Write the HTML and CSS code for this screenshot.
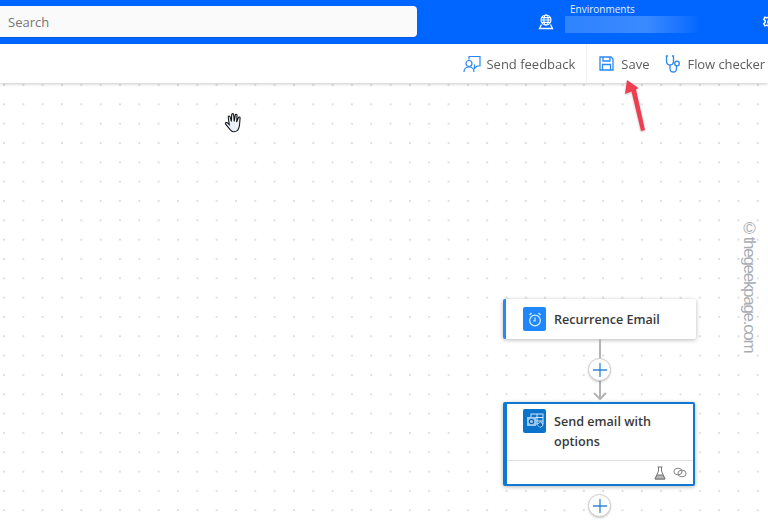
FILE: index.html
```html
<!DOCTYPE html>
<html lang="en">
<head>
<meta charset="utf-8">
<title>Flow editor</title>
<link rel="stylesheet" href="styles.css">
</head>
<body>
<div class="app">
  <header class="topbar">
    <div class="search"><span class="search-text">Search</span></div>
    <svg class="env-icon" viewBox="0 0 16 16" fill="none" stroke="#fff" stroke-width="1.1">
      <circle cx="8" cy="6" r="5"/><ellipse cx="8" cy="6" rx="2.2" ry="5"/><path d="M3 6h10M3.8 3.6h8.4M3.8 8.4h8.4"/><path d="M3.5 10.5 1.5 14.5h13l-2-4" stroke-width="1.3"/>
    </svg>
    <div class="env">
      <span class="env-label">Environments</span>
      <span class="env-name"></span>
    </div>
    <svg class="gear" viewBox="0 0 16 16" fill="none" stroke="#fff" stroke-width="1.4">
      <circle cx="8" cy="8" r="2.2"/><path d="M6.8 1h2.4l.4 2 1.6.9 1.9-.7 1.2 2.1-1.5 1.3v1.8l1.5 1.3-1.2 2.1-1.9-.7-1.6.9-.4 2H6.8l-.4-2-1.6-.9-1.9.7-1.2-2.1 1.500-1.300V6.600L1.700 5.300l1.200-2.100 1.900.7 1.600-.9z"/>
    </svg>
  </header>
  <nav class="toolbar">
    <div class="tool tool-feedback">
      <svg class="tool-icon" width="18" height="18" viewBox="0 0 18 18" fill="none" stroke="#2b88f0" stroke-width="1.2">
        <path d="M6 4.500V1.500h11v9.500h-3l-2.500 2.500V9.500"/><circle cx="6" cy="8.500" r="3"/><path d="M1 17c0-3 2-5 5-5s5 2 5 5"/>
      </svg>
      <span>Send feedback</span>
    </div>
    <div class="tool tool-save">
      <svg class="tool-icon" width="15" height="15" viewBox="0 0 15 15" fill="none" stroke="#2b88f0" stroke-width="1.300">
        <path d="M1 1h11l2 2v11H1z"/><path d="M4 1v4h7V1M3.500 14V8.500h8V14"/>
      </svg>
      <span>Save</span>
    </div>
    <div class="tool tool-checker">
      <svg class="tool-icon" width="17" height="18" viewBox="0 0 17 18" fill="none" stroke="#2b88f0" stroke-width="1.300">
        <path d="M3 1H1.500v5c0 2.500 1.700 4 3.500 4s3.500-1.500 3.500-4V1H7"/><path d="M5 10v3.500c0 2 1.500 3.500 3.500 3.500s3-1.500 3-3.500V11"/><circle cx="12" cy="8.500" r="2.300"/>
      </svg>
      <span class="checker-label">Flow checker</span>
    </div>
  </nav>
  <main class="canvas">
    <svg class="hand" width="20" height="21" viewBox="0 0 19 20">
      <path d="M6 17 1.500 11.500c-.8-1 .5-2 1.500-1.300L5 12 4 5c-.2-1.300 1.500-1.500 1.800-.3L7 9 7.300 2.500c.1-1.300 1.800-1.300 1.900 0L9.700 9l1-6c.2-1.200 1.800-1 1.700.2L12 9.500l1.700-4.200c.5-1.100 2-.5 1.600.6L14.800 12c-.3 3-.8 4-1.800 5.500 0 0-2 1.500-4 1.300-1.500-.1-3-1.800-3-1.800z" fill="#e9f1fb" stroke="#111" stroke-width="1"/>
    </svg>

    <svg class="red-arrow" width="30" height="56" viewBox="0 0 30 56">
      <path d="M4 2 2 16l6.500-2.500L18 53l4-1-9-40.500 2.500-1.500z" fill="#ee3f50"/>
    </svg>

    <div class="watermark">©thegeekpage.com</div>

    <div class="node node-recurrence">
      <span class="node-icon node-icon-clock">
        <svg width="14" height="15" viewBox="0 0 14 15" fill="none" stroke="#d9ecff" stroke-width="1.200">
          <circle cx="7" cy="8.500" r="5.300"/><path d="M7 5.500v3.500H5M1.500 3 3.500 1M12.500 3l-2-2"/>
        </svg>
      </span>
      <span class="node-title node-title-single">Recurrence Email</span>
    </div>

    <svg class="connector" width="24" height="62" viewBox="0 0 24 62" fill="none" stroke="#b4b4b4" stroke-width="2">
      <path d="M12 0v60M6 54l6 6 6-6"/>
    </svg>
    <div class="add add-middle"><svg width="14" height="14" viewBox="0 0 14 14" stroke="#2b88d8" stroke-width="1.300"><path d="M7 0v14M0 7h14"/></svg></div>

    <div class="node node-email">
      <div class="node-body">
        <span class="node-icon node-icon-mail">
          <svg width="18" height="16" viewBox="0 0 18 16" fill="none">
            <rect x="5" y="1" width="12" height="10" fill="none" stroke="#cfe4f7" stroke-width="1"/>
            <path d="M5 4.500h12M5 8h12M11 1v10" stroke="#cfe4f7" stroke-width="1"/>
            <rect x="1" y="4" width="9" height="9" fill="#9cc9ef"/>
            <circle cx="5.500" cy="8.500" r="2.200" fill="none" stroke="#0a63b3" stroke-width="1.200"/>
            <path d="M11 11.500l4-3 2 4-3 2z" fill="#0a63b3" stroke="#cfe4f7" stroke-width=".8"/>
          </svg>
        </span>
        <span class="node-title node-title-wrap">Send email with options</span>
      </div>
      <div class="node-foot">
        <svg width="12" height="14" viewBox="0 0 12 14" fill="none" stroke="#777" stroke-width="1">
          <path d="M3.500 1h5M4.500 1v4L1 13h10L7.500 5V1"/><path d="M3 9h6l2 4H1z" fill="#b5b5b5"/>
        </svg>
        <svg width="14" height="11" viewBox="0 0 14 11" fill="none" stroke="#888" stroke-width="1.100">
          <ellipse cx="5" cy="4.500" rx="4" ry="3.200"/><ellipse cx="9" cy="6.500" rx="4" ry="3.200"/>
        </svg>
      </div>
    </div>

    <div class="add add-bottom"><svg width="14" height="14" viewBox="0 0 14 14" stroke="#2b88d8" stroke-width="1.300"><path d="M7 0v14M0 7h14"/></svg></div>
  </main>
</div>
</body>
</html>
```
FILE: styles.css
```css
* { box-sizing: border-box; }
html, body { margin: 0; height: 100%; overflow: hidden; background: #fff; }
body { font-family: "Open Sans", "Noto Sans", sans-serif; }
.app { width: 768px; height: 521px; display: flex; flex-direction: column; overflow: hidden; filter: blur(.3px); }

.topbar { flex: 0 0 44px; background: #0066ff; display: flex; align-items: flex-start; position: relative; overflow: hidden; }
.search { flex: none; width: 429px; height: 31px; margin: 6px 0 0 -12px; padding: 0 0 0 20px; background: #fafafa; border-radius: 4px; display: flex; align-items: center; box-shadow: 0 1px 1px rgba(0,0,0,.15); }
.search-text { font-size: 13px; color: #767676; }
.env-icon { width: 16px; height: 16px; margin: 14px 0 0 121px; flex: none; }
.env { margin: 0 0 0 11px; width: 136px; flex: none; display: flex; flex-direction: column; }
.env-label { font-size: 10px; line-height: 13px; margin: 3px 0 0 5px; color: #e6f0ff; }
.env-name { height: 17px; width: 136px; background: linear-gradient(90deg, #2f83ff 0%, #3a8aff 60%, #1a74ff 85%, #0066ff 100%); }
.gear { width: 16px; height: 16px; margin: 14px 0 0 61px; flex: none; }

.toolbar { flex: 0 0 39px; background: #fff; display: flex; justify-content: flex-end; align-items: center; padding-right: 3px; box-shadow: 0 1px 3px rgba(0,0,0,.22); position: relative; z-index: 2; color: #5c5c5c; font-size: 13px; }
.tool { display: flex; align-items: center; height: 100%; }
.tool-feedback { gap: 5px; padding-right: 11px; border-right: 1px solid #f1f1f1; }
.tool-save { gap: 7px; padding: 0 15px 0 12px; }
.tool-checker { gap: 6px; }
.checker-label { letter-spacing: -.08px; }

.canvas { flex: 1; position: relative;
  background-color: #fff;
  background-image: radial-gradient(circle at center, #b4b4b4 0, #c8c8c8 .5px, rgba(255,255,255,0) .95px);
  background-size: 19.33px 19.33px;
  background-position: -5.67px -7.67px; }

.hand { position: absolute; left: 224px; top: 29px; }
.red-arrow { position: absolute; left: 623px; top: -5px; z-index: 3; filter: drop-shadow(0 1px 1px rgba(0,0,0,.25)); }
.watermark { position: absolute; left: 740px; top: 136px; writing-mode: vertical-rl; font-family: "Liberation Sans", sans-serif; font-size: 17px; letter-spacing: -1.3px; line-height: 19px; color: #a9adb3; }

.node { position: absolute; background: #fff; box-shadow: 0 1px 4px rgba(0,0,0,.28); color: #333; }
.node-recurrence { left: 503px; top: 216px; width: 193px; height: 40px; border-left: 3px solid #2b88f0; border-radius: 2px; display: flex; align-items: center; padding-left: 17px; gap: 8px; }
.node-icon { width: 23px; height: 24px; border-radius: 2px; display: flex; align-items: center; justify-content: center; flex: none; }
.node-icon-clock { background: #1f87fb; }
.node-icon-mail { background: #0a73cc; }
.node-title { font-size: 12.6px; font-weight: 600; line-height: 20px; color: #3a3a3a; }
.node-title-single { padding-top: 1px; }
.node-title-wrap { width: 120px; margin-top: 3px; }

.node-email { left: 503px; top: 319px; width: 192px; height: 84px; border: 2px solid #0f78d4; border-left-width: 4px; border-radius: 2px; display: flex; flex-direction: column; }
.node-body { height: 56px; display: flex; align-items: flex-start; gap: 8px; padding: 5px 0 0 16px; }
.node-foot { flex: 1; border-top: 1px solid #e2e2e2; display: flex; align-items: center; justify-content: flex-end; gap: 7px; padding: 0 6px 0 0; }

.connector { position: absolute; left: 587.5px; top: 256px; }
.add { position: absolute; width: 23px; height: 23px; border-radius: 50%; background: #fff; border: 1px solid #cfcfcf; box-shadow: 0 1px 2px rgba(0,0,0,.2); display: flex; align-items: center; justify-content: center; }
.add-middle { left: 588px; top: 275px; }
.add-bottom { left: 588px; top: 411px; }
```
